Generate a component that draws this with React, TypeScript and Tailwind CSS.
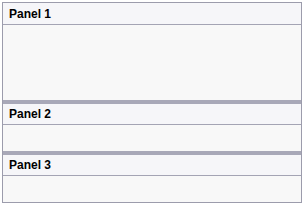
const panels = [
  { title: 'Panel 1', head: 'h-[22px]', body: 'h-[75px]' },
  { title: 'Panel 2', head: 'h-[21px]', body: 'h-[26px]' },
  { title: 'Panel 3', head: 'h-[21px]', body: 'h-[26px]' },
];

export default function App() {
  return (
    <div className="h-[205px] w-[304px] bg-white p-[2px] font-['Liberation_Sans',Arial,sans-serif]">
      <div className="flex flex-col border border-[#9c9cac] bg-[#f8f8f8]">
        {panels.map((p, i) => (
          <div key={p.title} className={i > 0 ? 'border-t-4 border-[#a8a8b8]' : ''}>
            {/* header text sits a hair above centre */}
            <div className={`${p.head} flex items-center border-b border-[#a4a4b4] bg-[#f6f6f9] px-[6px] text-[12px] font-bold text-black`}>
              {p.title}
            </div>
            <div className={`${p.body} bg-[#f8f8f8]`} />
          </div>
        ))}
      </div>
    </div>
  );
}
